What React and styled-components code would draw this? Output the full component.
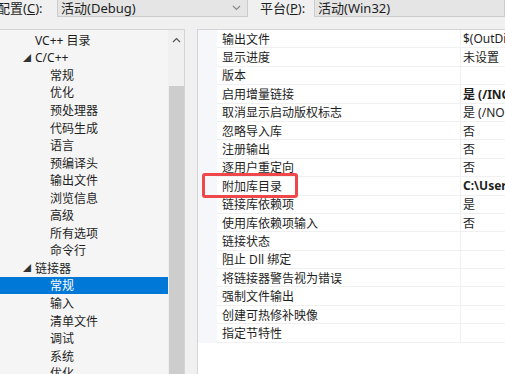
import React from 'react';
import styled, { createGlobalStyle } from 'styled-components';

const GlobalStyle = createGlobalStyle`
    html, body {
        margin: 0;
        padding: 0;
        background: #f0f0f0;
        overflow: hidden;
    }
    body {
        font-family: 'Noto Sans', 'Noto Sans CJK SC', sans-serif;
        color: #1e1e1e;
    }
`;

const Page = styled.div`
    width: 505px;
    height: 374px;
    overflow: hidden;
    display: flex;
    flex-direction: column;
    background: #f0f0f0;
`;

const TopBar = styled.div`
    height: 29px;
    display: flex;
    align-items: flex-start;
    font-size: 13px;
    margin-left: -3px;
`;

const Label = styled.span`
    line-height: 17px;
    width: ${({ $w }) => $w}px;
    flex-shrink: 0;
    white-space: nowrap;
`;

const Select = styled.div`
    box-sizing: border-box;
    height: 18px;
    width: ${({ $w }) => ($w ? `${$w}px` : 'auto')};
    flex: ${({ $w }) => ($w ? '0 0 auto' : '1')};
    margin-right: ${({ $mr }) => $mr || 0}px;
    margin-top: -1px;
    background: #e5e5e5;
    border: 1px solid #cccccc;
    display: flex;
    align-items: center;
    justify-content: space-between;
    padding: 0 6px 0 3px;
    line-height: 16px;
    white-space: nowrap;
`;

const Main = styled.div`
    flex: 1;
    display: flex;
    gap: 12px;
    min-height: 0;
`;

const TreePanel = styled.div`
    width: 186px;
    margin-left: -1px;
    box-sizing: border-box;
    border: 1px solid #d4d4d4;
    border-bottom: none;
    background: #f5f5f5;
    display: flex;
    overflow: hidden;
`;

const TreeList = styled.div`
    flex: 1;
    padding-top: 1px;
    font-size: 12px;
    font-family: 'Noto Sans', 'Noto Sans CJK SC', sans-serif;
`;

const TreeRow = styled.div`
    height: 17.55px;
    display: flex;
    align-items: center;
    padding-left: ${({ $level }) => ($level === 2 ? 50 : 23)}px;
    background: ${({ $selected }) => ($selected ? '#0078d7' : 'transparent')};
    color: ${({ $selected }) => ($selected ? '#ffffff' : '#1e1e1e')};
    white-space: nowrap;
`;

const Caret = styled.span`
    width: 12px;
    display: inline-flex;
    align-items: center;
    font-size: 8px;
    color: #333;
`;

const ScrollBar = styled.div`
    width: 16px;
    flex-shrink: 0;
    background: #f0f0f0;
    display: flex;
    flex-direction: column;
    align-items: center;
`;

const ArrowBox = styled.div`
    height: 17px;
    display: flex;
    align-items: center;
    justify-content: center;
    margin-top: 1px;
`;

const Thumb = styled.div`
    margin-top: 38px;
    width: 15px;
    flex: 1;
    background: #cdcdcd;
`;

const PropPanel = styled.div`
    flex: 1;
    box-sizing: border-box;
    border: 1px solid #d4d4d4;
    border-right: none;
    border-bottom: none;
    background: #ffffff;
    overflow: hidden;
    font-size: 12px;
    font-family: 'Noto Sans', 'Noto Sans CJK SC', sans-serif;
`;

const PropGrid = styled.div`
    display: grid;
    grid-template-columns: 19px 243px 1fr;
`;

const Gutter = styled.div`
    background: #f5f7fb;
    height: 18.4px;
`;

const NameCell = styled.div`
    position: relative;
    height: 18.4px;
    box-sizing: border-box;
    border-bottom: 1px solid #f0f0f0;
    display: flex;
    align-items: center;
    padding-left: 5px;
    white-space: nowrap;
`;

const ValueCell = styled.div`
    height: 18.4px;
    box-sizing: border-box;
    border-bottom: 1px solid #f0f0f0;
    border-left: 1px solid #f0f0f0;
    display: flex;
    align-items: center;
    padding-left: 2px;
    white-space: nowrap;
    overflow: hidden;
    font-weight: ${({ $bold }) => ($bold ? 700 : 400)};
`;

const Highlight = styled.div`
    position: absolute;
    left: -15px;
    top: -4px;
    width: 96px;
    height: 25px;
    box-sizing: border-box;
    border: 3px solid #f0474b;
    border-radius: 3px;
`;

const tree = [
    { text: 'VC++ 目录', level: 1 },
    { text: 'C/C++', level: 1, open: true },
    { text: '常规', level: 2 },
    { text: '优化', level: 2 },
    { text: '预处理器', level: 2 },
    { text: '代码生成', level: 2 },
    { text: '语言', level: 2 },
    { text: '预编译头', level: 2 },
    { text: '输出文件', level: 2 },
    { text: '浏览信息', level: 2 },
    { text: '高级', level: 2 },
    { text: '所有选项', level: 2 },
    { text: '命令行', level: 2 },
    { text: '链接器', level: 1, open: true },
    { text: '常规', level: 2, selected: true },
    { text: '输入', level: 2 },
    { text: '清单文件', level: 2 },
    { text: '调试', level: 2 },
    { text: '系统', level: 2 },
    { text: '优化', level: 2 },
];

const props = [
    { name: '输出文件', value: '$(OutDir)$(TargetName)$(TargetExt)' },
    { name: '显示进度', value: '未设置' },
    { name: '版本', value: '' },
    { name: '启用增量链接', value: '是 (/INCREMENTAL)', bold: true },
    { name: '取消显示启动版权标志', value: '是 (/NOLOGO)' },
    { name: '忽略导入库', value: '否' },
    { name: '注册输出', value: '否' },
    { name: '逐用户重定向', value: '否' },
    { name: '附加库目录', value: 'C:\\Users', bold: true, marked: true },
    { name: '链接库依赖项', value: '是' },
    { name: '使用库依赖项输入', value: '否' },
    { name: '链接状态', value: '' },
    { name: '阻止 Dll 绑定', value: '' },
    { name: '将链接器警告视为错误', value: '' },
    { name: '强制文件输出', value: '' },
    { name: '创建可热修补映像', value: '' },
    { name: '指定节特性', value: '' },
];

function Chevron({ up }) {
    return (
        <svg width="9" height="6" viewBox="0 0 9 6">
            <path
                d={up ? 'M1 5 L4.5 1.5 L8 5' : 'M1 1 L4.5 4.5 L8 1'}
                fill="none"
                stroke={up ? '#555' : '#888'}
                strokeWidth="1.2"
            />
        </svg>
    );
}

function App() {
    return (
        <Page>
            <GlobalStyle />
            <TopBar>
                <Label $w={60}>配置(<u>C</u>):</Label>
                <Select $w={191} $mr={12}>
                    <span>活动(Debug)</span>
                    <Chevron />
                </Select>
                <Label $w={54}>平台(<u>P</u>):</Label>
                <Select>
                    <span>活动(Win32)</span>
                </Select>
            </TopBar>
            <Main>
                <TreePanel>
                    <TreeList>
                        {tree.map((t, i) => (
                            <TreeRow key={i} $level={t.level} $selected={t.selected}>
                                {t.level === 1 && <Caret>{t.open ? '◢' : ''}</Caret>}
                                {t.text}
                            </TreeRow>
                        ))}
                    </TreeList>
                    <ScrollBar>
                        <ArrowBox>
                            <Chevron up />
                        </ArrowBox>
                        <Thumb />
                    </ScrollBar>
                </TreePanel>
                <PropPanel>
                    <PropGrid>
                        {props.map((p, i) => (
                            <React.Fragment key={i}>
                                <Gutter />
                                <NameCell>
                                    {p.name}
                                    {p.marked && <Highlight />}
                                </NameCell>
                                <ValueCell $bold={p.bold}>{p.value}</ValueCell>
                            </React.Fragment>
                        ))}
                    </PropGrid>
                </PropPanel>
            </Main>
        </Page>
    );
}

export default App;
